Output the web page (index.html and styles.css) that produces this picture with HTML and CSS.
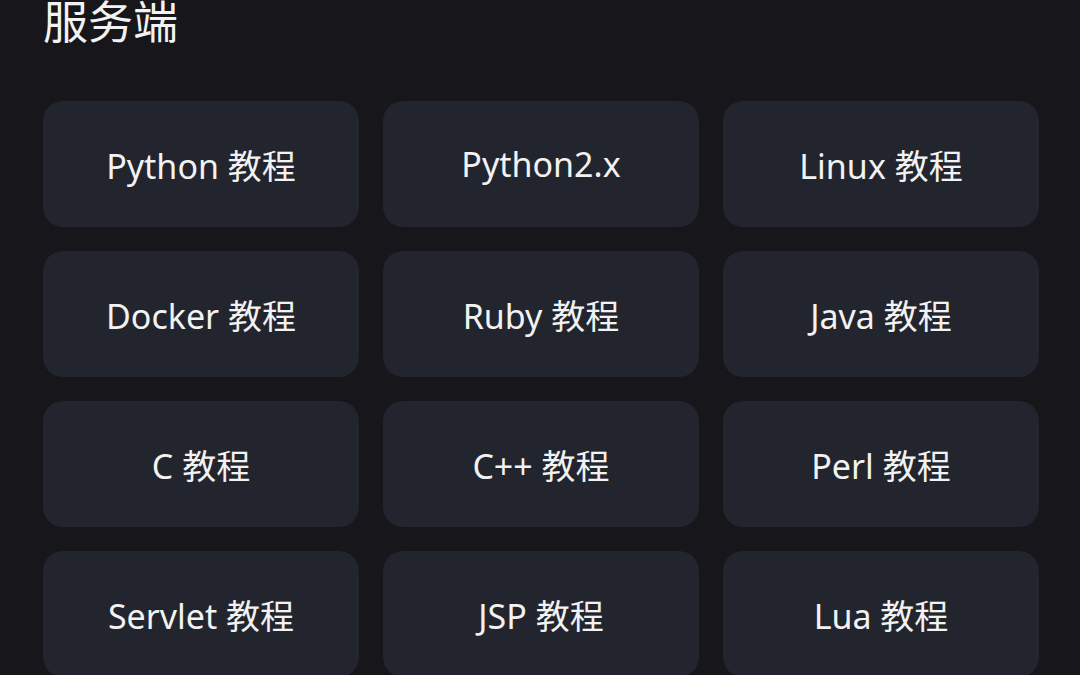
FILE: index.html
```html
<!DOCTYPE html>
<html lang="zh-CN">

<head>
    <meta charset="UTF-8" />
    <meta name="viewport" content="width=device-width, initial-scale=1.0" />
    <title>服务端</title>
    <link rel="stylesheet" href="styles.css">
</head>

<body>
    <p class="title">服务端</p>
    <div class="grid">
        <div class="card">Python 教程</div>
        <div class="card">Python2.x</div>
        <div class="card">Linux 教程</div>
        <div class="card">Docker 教程</div>
        <div class="card">Ruby 教程</div>
        <div class="card">Java 教程</div>
        <div class="card">C 教程</div>
        <div class="card">C++ 教程</div>
        <div class="card">Perl 教程</div>
        <div class="card">Servlet 教程</div>
        <div class="card">JSP 教程</div>
        <div class="card">Lua 教程</div>
    </div>
</body>

</html>
```

FILE: styles.css
```css
body {
    margin: 0;
    padding: 0 43px;
    background-color: #16161b;
    font-family: "Noto Sans", "Noto Sans CJK SC", sans-serif;
    color: #f2f2f2;
    overflow: hidden;
    height: 675px;
}

/* heading runs off the top edge in the original too */
.title {
    margin: -3px 0 0 0;
    font-family: "Noto Sans CJK SC", sans-serif;
    font-size: 45px;
    line-height: 1;
    font-weight: 400;
}

.grid {
    margin-top: 59px;
    display: grid;
    grid-template-columns: repeat(3, 316px);
    grid-auto-rows: 126px;
    gap: 24px;
}

.card {
    background-color: #22252d;
    border-radius: 20px;
    display: flex;
    align-items: center;
    justify-content: center;
    font-size: 34px;
}
```
